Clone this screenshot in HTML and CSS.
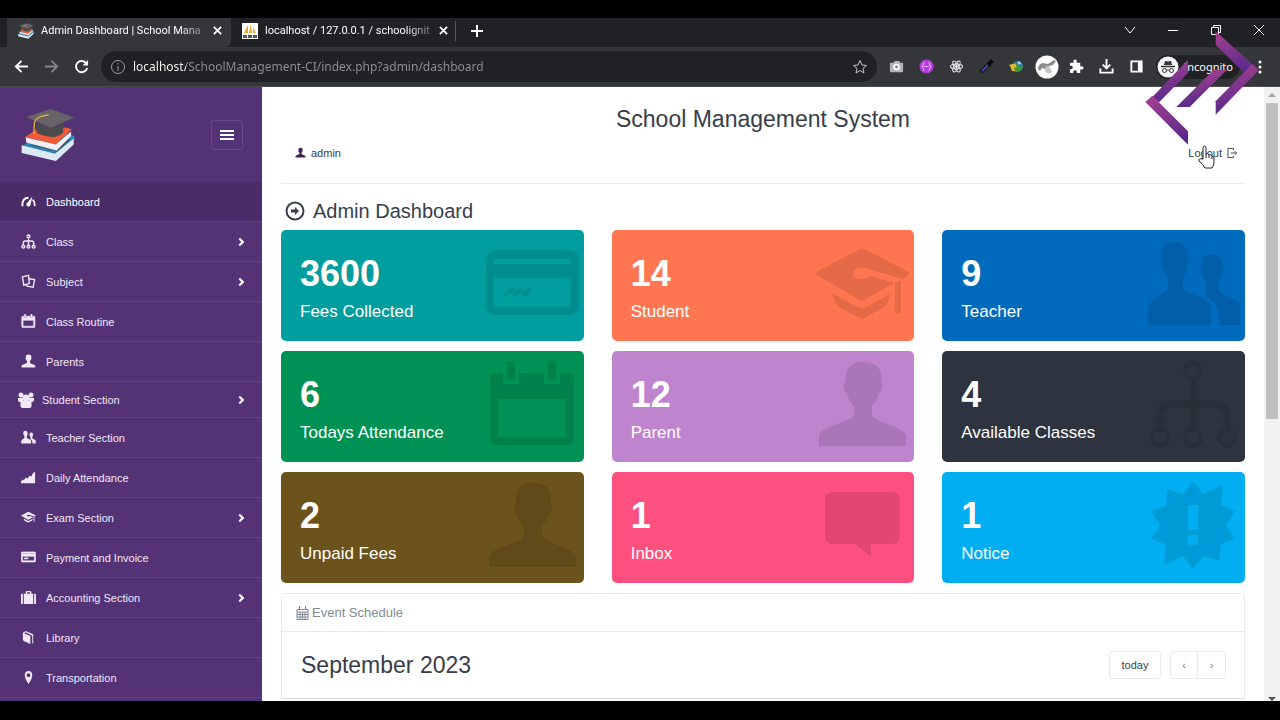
FILE: index.html
```html
<!DOCTYPE html>
<html lang="en">
<head>
  <meta charset="UTF-8" />
  <meta name="viewport" content="width=device-width, initial-scale=1.0" />
  <title>Admin Dashboard | School Management System</title>
  <link rel="stylesheet" href="styles.css">
</head>
<body>

  <!-- Icon set -->
  <svg class="icon-set" aria-hidden="true">
    <symbol id="i-card" viewBox="0 0 96 96"><path fill-rule="evenodd" d="M10 12H85a9 9 0 0 1 9 9V68a9 9 0 0 1-9 9H10a9 9 0 0 1-9-9V21a9 9 0 0 1 9-9ZM9 21V26H85V21ZM9 40V69H85V40Z"/><path d="M19 55l7-5h4l-3 3h4l4-3h3l-2 3h4l3-3h4l-5 8h-5l2-3h-4l-4 3h-4l3-3h-5l-3 3h-4l3-3Z"/></symbol>
    <symbol id="i-cap" viewBox="0 0 96 96"><path fill-rule="evenodd" d="M43 12q4-3 8 0L92 33q4 2 0 5L87 41 51 30q-13-1-13 5t8 6q6 0 9-3L79 45 51 61q-4 3-8 0L3 38q-4-2 0-5Z"/><path d="M80 45l6-3v31q0 3-3 3t-3-3ZM17 55L43 69q4 2 8 0L75 56q-1 10-6 13L51 79q-4 3-8 0L25 70q-6-4-8-15Z"/></symbol>
    <symbol id="i-users" viewBox="0 0 96 96"><path d="M28 4c10 0 15 6 14 18 0 12-3 15-5 18v9c3 8 24 9 27 18q1 4 1 20H1q0-16 2-20c3-9 17-10 19-18v-9c-3-4-6-8-7-18C13 10 18 4 28 4Z"/><path d="M65 16c8 0 13 5 12 16-1 9-3 10-5 13v6c4 7 18 8 21 15q2 5 1 21H73c1-17-3-22-13-28l1-14c-3-3-6-5-6-14-1-10 3-15 10-15Z"/></symbol>
    <symbol id="i-user" viewBox="0 0 96 96"><path d="M48 3c14 0 20 7 18 20l1 1c1 6-1 7-3 11-2 6-5 9-7 12v8c2 9 31 12 34 21v11H4V76c3-9 33-13 35-21v-8c-3-4-6-7-7-12-3-3-4-5-3-11l2-1C29 10 35 3 48 3Z"/></symbol>
    <symbol id="i-calendar" viewBox="0 0 96 96"><path fill-rule="evenodd" d="M11 14H18V25H34V14H59V25H75V14H83a6 6 0 0 1 6 6V80a6 6 0 0 1-6 6H11a6 6 0 0 1-6-6V20a6 6 0 0 1 6-6ZM13 40V78H81V40Z"/><path d="M22 2h8v19h-8ZM63 2h8v19h-8Z"/></symbol>
    <symbol id="i-tree" viewBox="0 0 96 96"><g fill="none" stroke="currentColor" stroke-width="4"><circle cx="47" cy="12" r="8"/><circle cx="14" cy="79" r="8"/><circle cx="47" cy="79" r="8"/><circle cx="81" cy="79" r="8"/><path stroke-width="7" d="M47 20V71M14 71V58q0-13 12-13H69q12 0 12 13V71"/></g></symbol>
    <symbol id="i-tree-sm" viewBox="0 0 16 16"><g fill="none" stroke="currentColor" stroke-width="1.500"><circle cx="8" cy="2.500" r="1.500"/><circle cx="2.500" cy="13.500" r="1.500"/><circle cx="8" cy="13.500" r="1.500"/><circle cx="13.500" cy="13.500" r="1.500"/><path d="M8 4V12M2.500 12V9.500Q2.500 7.500 4.500 7.500H11.500Q13.500 7.500 13.500 9.500V12"/></g></symbol>
    <symbol id="i-chat" viewBox="0 0 96 96"><path d="M17 12H78a7 7 0 0 1 7 7V57a7 7 0 0 1-7 7H56V77L40 64H17a7 7 0 0 1-7-7V19a7 7 0 0 1 7-7Z"/></symbol>
    <symbol id="i-notice" viewBox="0 0 96 96"><path fill-rule="evenodd" d="M47 1L57 14 77 5 75 25 89 31 80 45 89 59 75 64 73 81 57 76 47 89 37 76 18 85 20 64 5 59 14 45 5 31 20 26 21 9 37 14ZM42 25V50H52V25ZM42 55V65H52V55Z"/></symbol>
    <symbol id="i-gauge" viewBox="0 0 16 16"><path fill="none" stroke="currentColor" stroke-width="2" d="M1.500 13Q1 4 8 4M12.500 6Q15 8 14.500 13"/><path d="M12 3L10 12q-1 2-3 1t-1-3Z"/></symbol>
    <symbol id="i-copy" viewBox="0 0 16 16"><path fill="none" stroke="currentColor" stroke-width="1.500" d="M1.500 3L8 1.500 9 10 3 12ZM9 5L14.500 6 13 14 6.500 13 6 11"/></symbol>
    <symbol id="i-group" viewBox="0 0 16 16"><circle cx="3" cy="3" r="2.500"/><circle cx="13" cy="3" r="2.500"/><path d="M0 6h5v4H1.500Q0 10 0 8ZM11 6h5v2q0 2-2 2h-3Z"/><circle cx="8" cy="6" r="3.500"/><path d="M2.500 10q1-1.500 3-1h5q2-.5 3 1v4q0 2-2 2h-7q-2 0-2-2Z"/></symbol>
    <symbol id="i-chart" viewBox="0 0 16 16"><path d="M0 14v-2l2-2 1 1 2-3 2 1 2-3 2 1 2-4 2-1v12Z"/></symbol>
    <symbol id="i-case" viewBox="0 0 16 16"><path d="M0 5q0-1 1-1h1v11H1q-1 0-1-1ZM3 4h2V2.500Q5 1 6.500 1h3Q11 1 11 2.500V4h2v11H3ZM6.500 4h3V2.500h-3ZM14 4h1q1 0 1 1v9q0 1-1 1h-1Z"/></symbol>
    <symbol id="i-book" viewBox="0 0 16 16"><path d="M2 3L5 1l8 3.500V14l-1 .5V6L5 2.500 3.500 3.500 10 6.500V15L3.500 12Q2 11 2 10Z"/></symbol>
    <symbol id="i-pin" viewBox="0 0 16 16"><path fill-rule="evenodd" d="M8 1a4 4 0 0 1 4 4.500Q12 9 8 15 4 9 4 5.500A4 4 0 0 1 8 1ZM8 3.500a2 2 0 1 0 0 4 2 2 0 0 0 0-4Z"/></symbol>
    <symbol id="i-books" viewBox="62 64 164 162">
      <path fill="#2f86b5" d="M64 180L78 170 212 142 225 150V158L170 212 66 192Z"/>
      <path fill="#dce9f5" d="M64 176L165 202 222 156V174L168 224 64 200Z"/>
      <path fill="#3a5d78" d="M90 176L172 196 212 160 200 154Z"/>
      <path fill="#f05a36" d="M76 150L110 128 200 122 216 128 168 174Z"/>
      <path fill="#f1eef2" d="M76 152L168 174 214 134V148L170 192 78 168Z"/>
      <path fill="#4b4a4c" d="M110 108L152 126 190 110V138Q170 154 150 150 120 146 110 138Z"/>
      <path fill="#666467" d="M78 90L152 66 224 92 152 124Z"/>
      <path fill="none" stroke="#e9b23c" stroke-width="4" d="M146 84Q108 88 103 106L101 142"/>
    </symbol>
  </svg>

  <!-- Browser window -->
  <div class="tabstrip">
    <div class="tab active">
      <svg class="favicon"><use href="#i-books"/></svg>
      <span class="tab-title">Admin Dashboard | School Mana</span>
      <button class="tab-close" aria-label="Close tab"><svg viewBox="0 0 10 10"><path d="M1 1L9 9M9 1L1 9"/></svg></button>
    </div>
    <div class="tab">
      <svg class="favicon" viewBox="0 0 16 16"><path fill="#fff" d="M0 0H16V16H0Z"/><path fill="#f5a623" d="M2 10L6 2V10ZM7 10L9 1 10 10ZM11 10V4L14 10Z"/><path stroke="#555" stroke-width="3" stroke-dasharray="4 1" d="M1 13.500H15"/></svg>
      <span class="tab-title">localhost / 127.0.0.1 / schoolignit</span>
      <button class="tab-close" aria-label="Close tab"><svg viewBox="0 0 10 10"><path d="M1 1L9 9M9 1L1 9"/></svg></button>
    </div>
    <button class="new-tab" aria-label="New tab"><svg viewBox="0 0 12 12"><path d="M6 0V12M0 6H12"/></svg></button>
    <div class="window-controls">
      <button aria-label="Search tabs"><svg viewBox="0 0 12 12"><path d="M1 3L6 9 11 3"/></svg></button>
      <button aria-label="Minimize"><svg viewBox="0 0 12 12"><path d="M1 6.500H11"/></svg></button>
      <button aria-label="Restore"><svg viewBox="0 0 12 12"><path d="M1.500 3.500H8.500V10.500H1.500ZM3.500 3V1.500H10.500V8.500H9"/></svg></button>
      <button aria-label="Close"><svg viewBox="0 0 12 12"><path d="M1 1L11 11M11 1L1 11"/></svg></button>
    </div>
  </div>

  <div class="toolbar">
    <button class="tool" aria-label="Back"><svg viewBox="0 0 16 16"><path fill="none" stroke="#fff" stroke-width="2" d="M15 8H2M8 2L2 8 8 14"/></svg></button>
    <button class="tool" aria-label="Forward"><svg viewBox="0 0 16 16"><path fill="none" stroke="#85868a" stroke-width="2" d="M1 8H14M8 2L14 8 8 14"/></svg></button>
    <button class="tool" aria-label="Reload"><svg viewBox="0 0 16 16"><path fill="none" stroke="#fff" stroke-width="2" d="M13 4.500A6 6 0 1 0 14 9.500"/><path fill="#fff" d="M15 1V7H9Z"/></svg></button>
    <div class="address">
      <svg class="info" viewBox="0 0 16 16"><circle cx="8" cy="8" r="6.500"/><path d="M8 7V12M8 4V5.500"/></svg>
      <input type="text" aria-label="Address" value="localhost/SchoolManagement-CI/index.php?admin/dashboard">
      <svg class="star" viewBox="0 0 16 16"><path d="M8 1.500L10 6 14.500 6.500 11 9.500 12 14 8 11.500 4 14 5 9.500 1.500 6.500 6 6Z"/></svg>
    </div>
    <div class="extensions">
      <button class="tool" aria-label="Screenshot"><svg viewBox="0 0 16 16"><path fill="#b4b5b7" d="M2 4h3l1-2h5l1 2h2q1 0 1 1v8q0 1-1 1H2q-1 0-1-1V5q0-1 1-1Z"/><circle cx="8" cy="8.500" r="3.500" fill="#fff"/><circle cx="8" cy="8.500" r="1.500" fill="#777"/></svg></button>
      <button class="tool" aria-label="JSON viewer"><svg viewBox="0 0 16 16"><circle cx="8" cy="8" r="7.500" fill="#b43be0"/><g fill="none" stroke="#f0c8ff"><path d="M6 3.500Q4 4 4.500 6.500 4.500 8 3 8 4.500 8 4.500 9.500 4 12 6 12.500M10 3.500Q12 4 11.500 6.500 11.500 8 13 8 11.500 8 11.500 9.500 12 12 10 12.500M6 8H10"/></g></svg></button>
      <button class="tool" aria-label="React tools"><svg viewBox="0 0 16 16"><g fill="none" stroke="#d8d9db" stroke-width="1.200"><ellipse cx="8" cy="8" rx="6.500" ry="2.500"/><ellipse cx="8" cy="8" rx="6.500" ry="2.500" transform="rotate(60 8 8)"/><ellipse cx="8" cy="8" rx="6.500" ry="2.500" transform="rotate(120 8 8)"/></g><circle cx="8" cy="8" r="1.500" fill="#fff"/></svg></button>
      <button class="tool" aria-label="Color picker"><svg viewBox="0 0 16 16"><path stroke="#111" stroke-width="4" d="M2 14L9 7"/><path stroke="#4b50c8" stroke-width="2" d="M3 13L9 7"/><path fill="#0b0b0d" d="M8 4l2-1 3-3 3 3-3 3-1 3Z"/></svg></button>
      <button class="tool" aria-label="Download manager"><svg viewBox="0 0 16 16"><circle cx="9.500" cy="7.500" r="5.500" fill="#2f78b8"/><path fill="#a9d5ef" d="M9 3q3-1 4 2l-3 1Z"/><path fill="#3f9a35" d="M2 6l5-3 2 4q4 2 6 0-1 7-7 7Z"/><path fill="#e8b92c" d="M0 6l7-1 1 4-3 0q0 3 3 4-6 1-6-4Z"/></svg></button>
      <button class="tool" aria-label="Extension"><svg class="big" viewBox="0 0 24 24"><circle cx="12" cy="12" r="11.500" fill="#fff"/><path fill="#8b8b8b" d="M3 14q0-5 5-6l5 1 6-4 2 1-3 4-4 1-3 3-4-1-2 3Z"/><path fill="#c4c4c4" d="M11 11l4 1 2 5-4 2-3-3Z"/></svg></button>
      <button class="tool" aria-label="Extensions"><svg viewBox="0 0 16 16"><path fill="#fff" d="M1 4h4q-1-3.500 1.500-3.500T8 4h4v4q3.500-1 3.500 1.500T12 11v4H8.500q0-3-2-3t-2 3H1v-4q3 0 3-2T1 7Z"/></svg></button>
      <button class="tool" aria-label="Downloads"><svg viewBox="0 0 16 16"><path fill="none" stroke="#fff" stroke-width="2" d="M8 0V9M4 6L8 10 12 6M1.500 10V14.500H14.500V10"/></svg></button>
      <button class="tool" aria-label="Side panel"><svg viewBox="0 0 16 16"><path fill="#fff" fill-rule="evenodd" d="M1.500 1.500H14.500V14.500H1.500ZM3.500 3.500V12.500H9.500V3.500Z"/></svg></button>
    </div>
    <button class="incognito">
      <svg viewBox="0 0 22 22"><circle cx="11" cy="11" r="10.500" fill="#f1f3f4"/><g fill="none" stroke="#333"><path stroke-width="1.500" d="M4 10.500H18"/><circle cx="7.500" cy="14.500" r="2"/><circle cx="14.500" cy="14.500" r="2"/><path d="M9.500 14H12.500"/></g><path fill="#333" d="M7 9l1-4 3 .5L14 5l1 4Z"/></svg>
      <span>Incognito</span>
    </button>
    <button class="menu" aria-label="Menu"><svg viewBox="0 0 4 16"><circle cx="2" cy="3" r="1.500"/><circle cx="2" cy="8" r="1.500"/><circle cx="2" cy="13" r="1.500"/></svg></button>
  </div>

  <!-- Page -->
  <div class="page">
    <aside class="sidebar">
      <div class="sidebar-header">
        <a href="#" aria-label="Home"><svg class="logo"><use href="#i-books"/></svg></a>
        <button class="collapse" aria-label="Toggle menu"><svg viewBox="0 0 14 12"><path d="M0 2H14M0 6H14M0 10H14"/></svg></button>
      </div>
      <nav>
        <a href="#" class="nav-item active"><svg class="icon"><use href="#i-gauge"/></svg>Dashboard</a>
        <a href="#" class="nav-item has-sub"><svg class="icon"><use href="#i-tree-sm"/></svg>Class</a>
        <a href="#" class="nav-item has-sub"><svg class="icon"><use href="#i-copy"/></svg>Subject</a>
        <a href="#" class="nav-item"><svg class="icon heavy"><use href="#i-calendar"/></svg>Class Routine</a>
        <a href="#" class="nav-item"><svg class="icon"><use href="#i-user"/></svg>Parents</a>
        <a href="#" class="nav-item has-sub compact"><svg class="icon"><use href="#i-group"/></svg>Student Section</a>
        <a href="#" class="nav-item"><svg class="icon"><use href="#i-users"/></svg>Teacher Section</a>
        <a href="#" class="nav-item"><svg class="icon"><use href="#i-chart"/></svg>Daily Attendance</a>
        <a href="#" class="nav-item has-sub"><svg class="icon"><use href="#i-cap"/></svg>Exam Section</a>
        <a href="#" class="nav-item"><svg class="icon heavy"><use href="#i-card"/></svg>Payment and Invoice</a>
        <a href="#" class="nav-item has-sub"><svg class="icon"><use href="#i-case"/></svg>Accounting Section</a>
        <a href="#" class="nav-item"><svg class="icon"><use href="#i-book"/></svg>Library</a>
        <a href="#" class="nav-item"><svg class="icon"><use href="#i-pin"/></svg>Transportation</a>
      </nav>
    </aside>

    <main>
      <h1>School Management System</h1>
      <div class="user-row">
        <a href="#"><svg class="user-icon"><use href="#i-user"/></svg>admin</a>
        <a href="#" class="logout">Logout<svg viewBox="0 0 12 12"><path d="M7 3V1H1V11H7V9M4 6H10M8.500 4L10.500 6 8.500 8"/></svg></a>
      </div>

      <h2><svg viewBox="0 0 20 20"><circle cx="10" cy="10" r="8.500"/><path d="M6 8.500H10V6L14 10 10 14V11.500H6Z"/></svg>Admin Dashboard</h2>

      <div class="tiles">
        <div class="tile teal"><svg><use href="#i-card"/></svg><div class="num">3600</div><h3>Fees Collected</h3></div>
        <div class="tile orange"><svg><use href="#i-cap"/></svg><div class="num">14</div><h3>Student</h3></div>
        <div class="tile blue"><svg><use href="#i-users"/></svg><div class="num">9</div><h3>Teacher</h3></div>
        <div class="tile green"><svg><use href="#i-calendar"/></svg><div class="num">6</div><h3>Todays Attendance</h3></div>
        <div class="tile purple"><svg><use href="#i-user"/></svg><div class="num">12</div><h3>Parent</h3></div>
        <div class="tile dark"><svg><use href="#i-tree"/></svg><div class="num">4</div><h3>Available Classes</h3></div>
        <div class="tile brown"><svg><use href="#i-user"/></svg><div class="num">2</div><h3>Unpaid Fees</h3></div>
        <div class="tile pink"><svg><use href="#i-chat"/></svg><div class="num">1</div><h3>Inbox</h3></div>
        <div class="tile aqua"><svg><use href="#i-notice"/></svg><div class="num">1</div><h3>Notice</h3></div>
      </div>

      <section class="panel">
        <div class="panel-heading">
          <svg viewBox="0 0 13 14"><path d="M1 3.500H12V13.500H1ZM1 6H12M1 8.500H12M1 11H12M4 6V13.500M6.500 6V13.500M9 6V13.500M3.500 0V4M9.500 0V4"/></svg>
          Event Schedule
        </div>
        <div class="calendar-bar">
          <h2>September 2023</h2>
          <button class="today">today</button>
          <div class="btn-group">
            <button aria-label="Previous month">‹</button>
            <button aria-label="Next month">›</button>
          </div>
        </div>
        <div class="calendar-grid"></div>
      </section>
    </main>

    <div class="scrollbar">
      <span class="arrow up"></span>
      <span class="thumb"></span>
      <span class="arrow down"></span>
    </div>
  </div>

  <!-- Floating brand mark and pointer -->
  <svg class="brand-mark" viewBox="976 64 342 342" aria-hidden="true">
    <defs>
      <linearGradient id="g1" x1="0.200" y1="0" x2="0.400" y2="1"><stop offset="0" stop-color="#a5418f"/><stop offset="1" stop-color="#57298a"/></linearGradient>
    </defs>
    <g fill="url(#g1)">
      <path d="M1105 150V190L1018 278 998 262Z"/>
      <path d="M977 277L998 258 1105 365V405Z"/>
      <path d="M1182 180H1222L1110 292H1070Z"/>
      <path d="M1188 65V105L1277 194 1300 165Z"/>
      <path d="M1298 162L1317 182 1188 315V275Z"/>
    </g>
  </svg>
  <svg class="pointer" viewBox="0 0 18 24" aria-hidden="true"><path fill="#fff" stroke="#222" d="M6 14V3q0-2 1.500-2T9 3v6q2-1 3 1 2-1 3 1 2 0 2 2v4q0 3-2 6H8Q6 19 2 16q-1-3 4-2ZM9 9v4M12 10v3M15 11v3"/></svg>

</body>
</html>
```
FILE: styles.css
```css
* {
  margin: 0; padding: 0;
  box-sizing: border-box;
}

body {
  height: 100vh;
  padding: 18px 0 19px;
  display: flex;
  flex-direction: column;
  overflow: hidden;
  position: relative;
  background: #000;
  color: #373e4a;
  font-family: "Liberation Sans", Arial, sans-serif;
  font-size: 11px;
}

a {
  color: inherit;
  text-decoration: none;
}

button {
  border: none;
  background: none;
  font: inherit;
  color: inherit;
  cursor: pointer;
}

svg {
  flex: none;
  fill: currentColor;
}

.icon-set {
  position: absolute;
  width: 0;
  height: 0;
}

/* Browser tabs */
.tabstrip, .toolbar {
  flex: none;
  display: flex;
  align-items: center;
  color: #fff;
  font-family: "Noto Sans", sans-serif;
}

.tabstrip {
  height: 29px;
  padding-left: 7px;
  background: #202124;
}

.tab {
  flex: none;
  width: 224px;
  height: 29px;
  padding: 0 7px 4px 11px;
  display: flex;
  align-items: center;
  gap: 7px;
}

.tab.active {
  background: #35363a;
  border-radius: 0 0 6px 0;
}

.favicon {
  width: 16px;
  height: 16px;
}

.tab-title {
  flex: 1;
  font-family: Roboto, sans-serif;
  white-space: nowrap;
  -webkit-mask-image: linear-gradient(90deg, #000 85%, rgba(0,0,0,0.3));
  mask-image: linear-gradient(90deg, #000 85%, rgba(0,0,0,0.3));
}

.tab-close {
  flex: none;
  width: 14px;
  height: 14px;
}

.tab-close svg {
  display: block;
  width: 9px;
  margin: auto;
}

.tab-close svg, .new-tab svg, .window-controls svg {
  fill: none;
  stroke: #fff;
}

.tab-close svg, .new-tab svg {
  stroke-width: 2;
}

.new-tab {
  height: 20px;
  margin-bottom: 4px;
  padding: 0 15px;
  border-left: 1px solid #55565a;
}

.new-tab svg {
  display: block;
  width: 12px;
}

.window-controls {
  margin-left: auto;
  align-self: flex-start;
  display: flex;
}

.window-controls button {
  width: 43px;
  height: 20px;
}

.window-controls svg {
  width: 12px;
  vertical-align: middle;
}

/* Browser toolbar */
.toolbar {
  height: 40px;
  padding: 0 10px 0 6px;
  background: #35363a;
  border-bottom: 1px solid #4a4b50;
}

.tool {
  width: 30px;
  height: 30px;
  display: flex;
  align-items: center;
  justify-content: center;
}

.tool svg {
  width: 15px;
  height: 15px;
}

.tool .big {
  width: 24px;
  height: 24px;
}

.address {
  flex: 1;
  height: 31px;
  margin: 0 5px;
  padding: 0 9px;
  display: flex;
  align-items: center;
  gap: 7px;
  background: #202124;
  border-radius: 16px;
}

.info, .star {
  width: 16px;
  height: 16px;
  fill: none;
  stroke: #c4c5c8;
}

.info {
  stroke: #9aa0a6;
}

.address input {
  flex: 1;
  border: none;
  outline: none;
  font-family: "Noto Sans", sans-serif;
  font-size: 12px;
  color: transparent;
  background: linear-gradient(90deg, #fff 53px, #909296 53px);
  -webkit-background-clip: text;
  background-clip: text;
}

.extensions {
  display: flex;
}

.incognito {
  height: 24px;
  margin-left: 4px;
  padding: 0 7px 0 1px;
  display: flex;
  align-items: center;
  gap: 5px;
  background: #202124;
  border-radius: 12px;
}

.incognito svg {
  width: 22px;
  height: 22px;
}

.menu {
  width: 20px;
  margin-left: 10px;
}

.menu svg {
  width: 4px;
  height: 16px;
  vertical-align: middle;
}

/* Page */
.page {
  flex: 1;
  min-height: 0;
  display: flex;
  background: #fff;
  overflow: hidden;
}

.sidebar {
  flex: none;
  width: 262px;
  background: #533276;
  color: #f1e8f8;
  overflow: hidden;
}

.sidebar-header {
  height: 95px;
  padding: 0 19px 0 21px;
  display: flex;
  align-items: center;
  justify-content: space-between;
}

.logo {
  display: block;
  width: 54px;
  height: 54px;
}

.collapse {
  width: 32px;
  height: 30px;
  border: 1px solid #67478a;
  border-radius: 3px;
}

.collapse svg {
  width: 14px;
  height: 12px;
  stroke: #fff;
  stroke-width: 2;
  vertical-align: middle;
}

.nav-item {
  height: 40px;
  padding: 0 19px 0 21px;
  display: flex;
  align-items: center;
  gap: 10px;
  border-bottom: 1px solid #624387;
}

.nav-item.active {
  background: #4b2c69;
  color: #fff;
}

.nav-item.compact {
  height: 36px;
  padding-left: 18px;
  gap: 8px;
}

.nav-item .icon {
  width: 15px;
  height: 15px;
}

.nav-item.compact .icon {
  width: 16px;
  height: 16px;
}

.icon.heavy {
  stroke: currentColor;
  stroke-width: 4;
}

.has-sub::after {
  content: "";
  box-sizing: border-box;
  width: 6px;
  height: 6px;
  margin-left: auto;
  border: solid #fff;
  border-width: 2px 2px 0 0;
  transform: rotate(45deg);
}

main {
  flex: 1;
  padding: 16px 19px 0;
  overflow: hidden;
}

h1, h2, h3 {
  font-weight: normal;
}

h1 {
  font-size: 23px;
  line-height: 32px;
  text-align: center;
}

.user-row {
  padding: 0 7px 12px 14px;
  display: flex;
  justify-content: space-between;
  line-height: 36px;
  border-bottom: 1px solid #ebebeb;
}

.user-row a {
  display: flex;
  align-items: center;
  gap: 5px;
}

.user-row svg {
  width: 11px;
  height: 12px;
}

.user-row .user-icon {
  color: #402258;
}

.logout svg {
  fill: none;
  stroke: #373e4a;
}

main > h2 {
  margin: 13px 0 5px;
  padding-left: 4px;
  display: flex;
  align-items: center;
  gap: 8px;
  font-size: 20px;
  line-height: 28px;
}

main > h2 svg {
  width: 20px;
  height: 20px;
}

main > h2 circle {
  fill: none;
  stroke: currentColor;
  stroke-width: 2;
}

/* Stat tiles */
.tiles {
  display: grid;
  grid-template-columns: repeat(3, 1fr);
  gap: 10px 28px;
}

.tile {
  position: relative;
  height: 111px;
  padding: 24px 19px;
  border-radius: 5px;
  color: #fff;
}

.tile svg {
  position: absolute;
  top: 8px;
  right: 3px;
  width: 96px;
  height: 96px;
  color: #000;
  opacity: 0.1;
}

.tile .num {
  font-size: 36px;
  font-weight: bold;
  line-height: 40px;
}

.tile h3 {
  margin-top: 6px;
  font-size: 17px;
  line-height: 24px;
}

.teal { background: #009e9e; }
.orange { background: #ff7650; }
.blue { background: #006bbc; }
.green { background: #009154; }
.purple { background: #be84cd; }
.dark { background: #2e343f; }
.brown { background: #6c531c; }
.pink { background: #fd507e; }
.aqua { background: #00aef1; }

/* Event calendar */
.panel {
  margin-top: 10px;
  border: 1px solid #ebebeb;
  border-radius: 3px;
}

.panel-heading {
  height: 38px;
  padding: 0 14px;
  display: flex;
  align-items: center;
  gap: 3px;
  border-bottom: 1px solid #ebebeb;
  color: #7f8a93;
  font-size: 13px;
}

.panel-heading svg {
  width: 13px;
  height: 14px;
  fill: none;
  stroke: currentColor;
}

.calendar-bar {
  padding: 18px 18px 18px 19px;
  display: flex;
  align-items: center;
  gap: 9px;
}

.calendar-bar h2 {
  margin-right: auto;
  font-size: 23px;
  line-height: 30px;
}

.calendar-bar button {
  height: 28px;
  border: 1px solid #ebebeb;
}

.calendar-bar .today {
  width: 52px;
  border-radius: 3px;
}

.btn-group {
  display: flex;
}

.btn-group button {
  width: 28px;
  color: #777;
}

.btn-group button:first-child {
  border-radius: 3px 0 0 3px;
}

.btn-group button:last-child {
  border-left: none;
  border-radius: 0 3px 3px 0;
}

.calendar-grid {
  height: 300px;
  border-top: 1px solid #dcdcdc;
}

.scrollbar {
  flex: none;
  width: 16px;
  padding: 6px 2px 0;
  display: flex;
  flex-direction: column;
  align-items: center;
  background: #f1f1f1;
}

.arrow {
  border: 4px solid transparent;
}

.arrow.up {
  border-top: none;
  border-bottom-color: #a3a3a3;
}

.arrow.down {
  margin-top: auto;
  border-bottom: none;
  border-top-color: #505050;
}

.thumb {
  width: 100%;
  height: 52%;
  margin-top: 6px;
  background: #c1c1c1;
}

/* Floating over the whole window */
.brand-mark {
  position: absolute;
  top: 31px;
  right: 21px;
  width: 114px;
  height: 114px;
}

.pointer {
  position: absolute;
  top: 145px;
  right: 65px;
  width: 18px;
  height: 24px;
}
```
